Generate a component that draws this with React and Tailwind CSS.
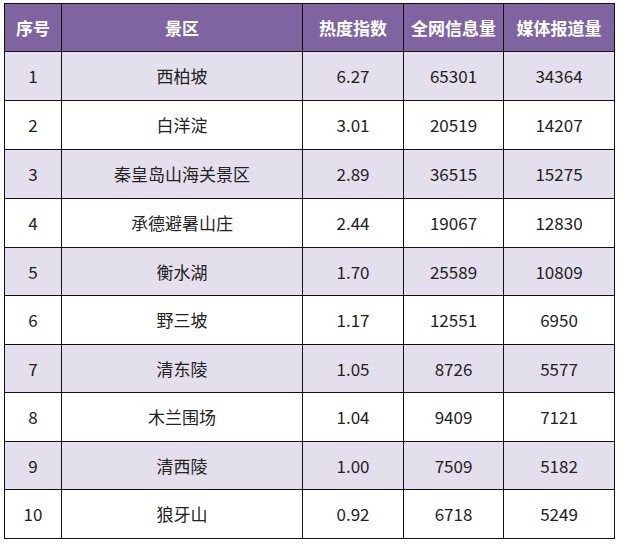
const rows = [
  ["1", "西柏坡", "6.27", "65301", "34364"],
  ["2", "白洋淀", "3.01", "20519", "14207"],
  ["3", "秦皇岛山海关景区", "2.89", "36515", "15275"],
  ["4", "承德避暑山庄", "2.44", "19067", "12830"],
  ["5", "衡水湖", "1.70", "25589", "10809"],
  ["6", "野三坡", "1.17", "12551", "6950"],
  ["7", "清东陵", "1.05", "8726", "5577"],
  ["8", "木兰围场", "1.04", "9409", "7121"],
  ["9", "清西陵", "1.00", "7509", "5182"],
  ["10", "狼牙山", "0.92", "6718", "5249"],
];

const heights = ["h-[49px]", "h-[49px]", "h-[49px]", "h-[49px]", "h-[48px]", "h-[49px]", "h-[48px]", "h-[49px]", "h-[48px]", "h-[49px]"];
const widths = ["w-[57px]", "w-[241px]", "w-[101px]", "w-[100px]", "w-[111px]"];
const head = ["序号", "景区", "热度指数", "全网信息量", "媒体报道量"];

export default function App() {
  return (
    <div className="w-[620px] h-[544px] bg-white pt-[3px] pl-[4px] font-['Noto_Sans_CJK_SC','Noto_Sans',sans-serif]">
      <div className="w-[611px] border-l border-t border-[#111]">
        {/* header */}
        <div className="flex h-[48px] bg-[#8064a2] text-white font-bold text-[17px]">
          {head.map((h, i) => (
            <div key={h} className={`${widths[i]} flex items-center justify-center border-r border-b border-[#111]`}>
              {h}
            </div>
          ))}
        </div>
        {rows.map((r, ri) => (
          <div
            key={r[0]}
            className={`flex ${heights[ri]} text-[17px] text-[#222] ${ri % 2 === 0 ? "bg-[#e4dfec]" : "bg-white"}`}
          >
            {r.map((c, i) => (
              <div key={i} className={`${widths[i]} flex items-center justify-center border-r border-b border-[#111]`}>
                {c}
              </div>
            ))}
          </div>
        ))}
      </div>
    </div>
  );
}
